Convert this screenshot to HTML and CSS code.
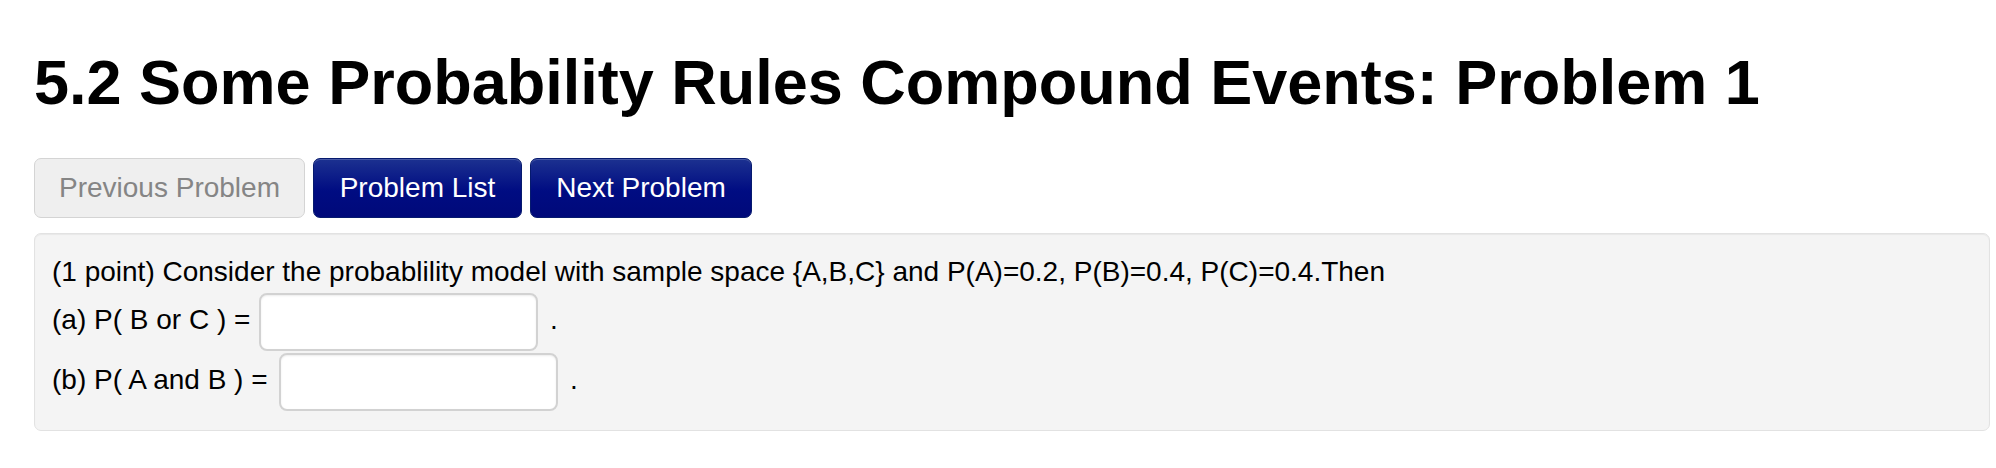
FILE: index.html
```html
<!DOCTYPE html>
<html lang="en">
<head>
<meta charset="utf-8">
<title>5.2 Some Probability Rules Compound Events: Problem 1</title>
<link rel="stylesheet" href="styles.css">
</head>
<body>
<div class="page">
  <h1 class="title">5.2 Some Probability Rules Compound Events: Problem 1</h1>
  <div class="nav">
    <span class="btn btn-disabled btn-prev">Previous Problem</span>
    <a class="btn btn-primary btn-list" href="#">Problem List</a>
    <a class="btn btn-primary btn-next" href="#">Next Problem</a>
  </div>
  <div class="problem">
    <div class="problem-text">(1 point) Consider the probablility model with sample space {A,B,C} and P(A)=0.2, P(B)=0.4, P(C)=0.4.Then<br>(a) P( B or C ) = <input class="answer" type="text"> .<br>(b) P( A and B ) = <input class="answer answer-b" type="text"> .</div>
  </div>
</div>
</body>
</html>
```

FILE: styles.css
```css
html, body {
  margin: 0;
  padding: 0;
  background: #ffffff;
}

.page {
  padding: 0 6px 0 34px;
  font-family: "Liberation Sans", Arial, Helvetica, sans-serif;
  color: #000000;
}

.title {
  margin: 42px 0 0 0;
  font-size: 63px;
  line-height: 80px;
  font-weight: bold;
}

.nav {
  display: flex;
  gap: 8px;
  margin-top: 36px;
}

.btn {
  display: inline-flex;
  align-items: center;
  justify-content: center;
  box-sizing: border-box;
  height: 60px;
  padding: 0;
  font-size: 28px;
  border-radius: 7px;
  border: 1px solid transparent;
  text-decoration: none;
}

.btn-prev { width: 271px; }
.btn-list { width: 209px; }
.btn-next { width: 222px; }

.btn-disabled {
  background: #efefef;
  border-color: #d4d4d4;
  color: #858585;
}

.btn-primary {
  background: linear-gradient(to bottom, #1c3190 0%, #000c82 55%, #00097a 100%);
  border-color: #061a6e;
  color: #ffffff;
  box-shadow: inset 0 1px 0 rgba(255,255,255,0.2);
}

.problem {
  margin-top: 15px;
  box-sizing: border-box;
  height: 198px;
  background: #f4f4f4;
  border: 1px solid #e2e2e2;
  border-radius: 7px;
  box-shadow: inset 0 1px 1px rgba(0,0,0,0.05);
  padding: 18px 17px 0 17px;
}

.problem-text {
  font-size: 28px;
  line-height: 40px;
}

.answer {
  box-sizing: border-box;
  width: 279px;
  height: 58px;
  margin: 1px 4px 1px 1px;
  padding: 0 12px;
  vertical-align: middle;
  background: #ffffff;
  border: 2px solid #d2d2d2;
  border-radius: 8px;
  box-shadow: inset 0 1px 2px rgba(0,0,0,0.075);
  font-size: 28px;
  font-family: "Liberation Sans", Arial, sans-serif;
}

.answer-b {
  margin-left: 4px;
}
```
